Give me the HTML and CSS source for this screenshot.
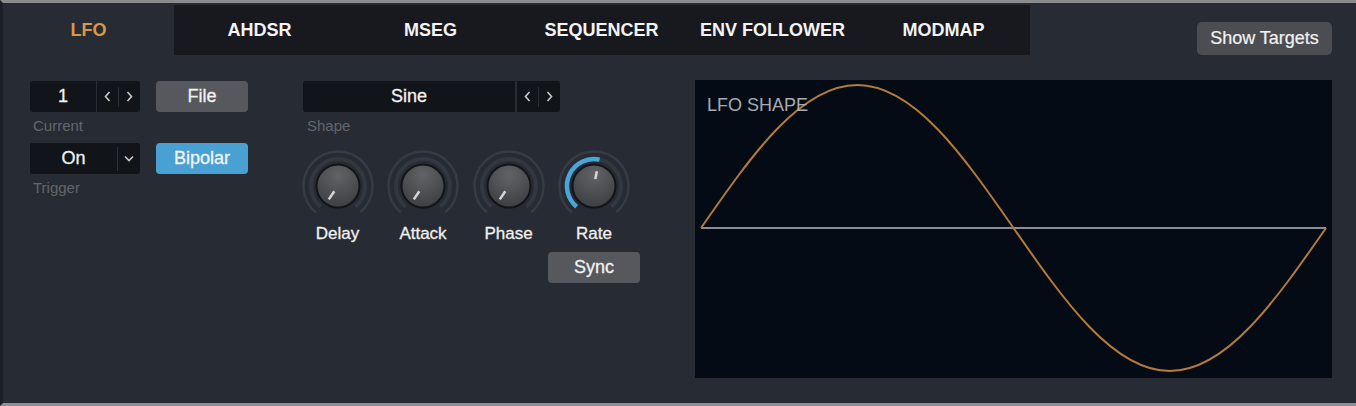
FILE: index.html
```html
<!DOCTYPE html>
<html>
  <head>
    <title>LFO</title>
    <link rel="stylesheet" href="styles.css">
  </head>
  <body>
    <svg class="defs" width="0" height="0">
      <defs>
        <radialGradient id="knobFill" cx="50%" cy="25%" r="80%">
          <stop offset="0%" stop-color="#626367" />
          <stop offset="100%" stop-color="#3b3c40" />
        </radialGradient>
      </defs>
    </svg>
    <div class="plugin">
      <div class="header">
        <nav class="tabs">
          <div class="tab active">LFO</div>
          <div class="tab">AHDSR</div>
          <div class="tab">MSEG</div>
          <div class="tab">SEQUENCER</div>
          <div class="tab">ENV FOLLOWER</div>
          <div class="tab">MODMAP</div>
        </nav>
        <button class="btn btn-targets">Show Targets</button>
      </div>

      <div class="main">
        <div class="left">
          <div class="row">
            <div class="field">
              <div class="value">1</div>
              <div class="arrows">
                <span class="arrow"><svg width="7" height="11" viewBox="0 0 7 11"><polyline points="5.5,1 1.5,5.5 5.5,10" /></svg></span>
                <span class="arrow-sep"></span>
                <span class="arrow"><svg width="7" height="11" viewBox="0 0 7 11"><polyline points="1.5,1 5.5,5.5 1.5,10" /></svg></span>
              </div>
            </div>
            <button class="btn">File</button>
          </div>
          <div class="caption">Current</div>

          <div class="row">
            <div class="field select">
              <div class="value">On</div>
              <span class="select-sep"></span>
              <span class="chevron"><svg width="10" height="7" viewBox="0 0 10 7"><polyline points="1,1.5 5,5.5 9,1.5" /></svg></span>
            </div>
            <button class="btn btn-blue">Bipolar</button>
          </div>
          <div class="caption">Trigger</div>
        </div>

        <div class="middle">
          <div class="field shape-field">
            <div class="value">Sine</div>
            <div class="arrows">
              <span class="arrow"><svg width="7" height="11" viewBox="0 0 7 11"><polyline points="5.5,1 1.5,5.5 5.5,10" /></svg></span>
              <span class="arrow-sep"></span>
              <span class="arrow"><svg width="7" height="11" viewBox="0 0 7 11"><polyline points="1.5,1 5.5,5.5 1.5,10" /></svg></span>
            </div>
          </div>
          <div class="caption shape-caption">Shape</div>

          <div class="knobs">
            <div class="knob">
              <svg viewBox="0 0 72 72">
                <path class="ring-outer" d="M13.8,62.4 A34.5,34.5 0 1 1 58.2,62.4" />
                <path class="ring-inner" d="M18.6,56.7 A27,27 0 1 1 53.4,56.7" />
                <circle class="knob-body" cx="36" cy="36" r="21.5" />
                <line class="pointer" x1="32.3" y1="41.3" x2="26.8" y2="49.4" />
              </svg>
              <div class="knob-label">Delay</div>
            </div>
            <div class="knob">
              <svg viewBox="0 0 72 72">
                <path class="ring-outer" d="M13.8,62.4 A34.5,34.5 0 1 1 58.2,62.4" />
                <path class="ring-inner" d="M18.6,56.7 A27,27 0 1 1 53.4,56.7" />
                <circle class="knob-body" cx="36" cy="36" r="21.5" />
                <line class="pointer" x1="32.3" y1="41.3" x2="26.8" y2="49.4" />
              </svg>
              <div class="knob-label">Attack</div>
            </div>
            <div class="knob">
              <svg viewBox="0 0 72 72">
                <path class="ring-outer" d="M13.8,62.4 A34.5,34.5 0 1 1 58.2,62.4" />
                <path class="ring-inner" d="M18.6,56.7 A27,27 0 1 1 53.4,56.7" />
                <circle class="knob-body" cx="36" cy="36" r="21.5" />
                <line class="pointer" x1="32.3" y1="41.3" x2="26.8" y2="49.4" />
              </svg>
              <div class="knob-label">Phase</div>
            </div>
            <div class="knob">
              <svg viewBox="0 0 72 72">
                <path class="ring-outer" d="M13.8,62.4 A34.5,34.5 0 1 1 58.2,62.4" />
                <path class="ring-inner" d="M18.6,56.7 A27,27 0 1 1 53.4,56.7" />
                <path class="ring-value" d="M18.6,56.7 A27,27 0 0 1 41.6,9.6" />
                <circle class="knob-body" cx="36" cy="36" r="21.5" />
                <line class="pointer" x1="37.3" y1="29.1" x2="38.9" y2="21.3" />
              </svg>
              <div class="knob-label">Rate</div>
              <button class="btn btn-sync">Sync</button>
            </div>
          </div>
        </div>

        <div class="graph">
          <div class="graph-title">LFO SHAPE</div>
          <svg viewBox="0 0 637 298" width="637" height="298">
            <line class="axis" x1="6" y1="148" x2="631" y2="148" />
            <path class="wave" d="M6,148 C56.96,74.74 105.7,5 162.25,5 C218.8,5 267.54,74.74 318.5,148 C369.46,221.26 418.2,291 474.75,291 C531.3,291 580.04,221.26 631,148" />
          </svg>
        </div>
      </div>
    </div>
  </body>
</html>
```

FILE: styles.css
```css
body {
  margin: 0;
  background-color: #272b33;
  font-family: "Liberation Sans", Arial, sans-serif;
}
.defs {
  position: absolute;
}
.plugin {
  height: 400px;
  border-top: 3px solid #8a8b8e;
  border-bottom: 3px solid #8e8f92;
  border-left: 3px solid #1b1e24;
  background-color: #272b33;
  overflow: hidden;
}
.header {
  display: flex;
  align-items: flex-end;
  padding-top: 2px;
  padding-right: 24px;
}
.tabs {
  display: flex;
  height: 50px;
  padding-right: 1px;
  background-color: #17191e;
}
.tab {
  width: 171px;
  display: flex;
  align-items: center;
  justify-content: center;
  color: #f3f3f3;
  font-size: 18px;
  font-weight: bold;
}
.tab.active {
  background-color: #272b33;
  color: #dc9848;
}
.btn {
  width: 92px;
  height: 31px;
  padding: 0;
  border: 0;
  border-radius: 4px;
  background-color: #56585d;
  color: #f2f2f2;
  font-family: "Liberation Sans", Arial, sans-serif;
  font-size: 18px;
  -webkit-text-stroke: 0.3px #f2f2f2;
}
.btn-targets {
  margin-left: auto;
  width: 135px;
  height: 33px;
  border-radius: 5px;
  background-color: #4b4d53;
  -webkit-text-stroke: 0.2px #f2f2f2;
}
.btn-blue {
  background-color: #48a1d2;
  color: #f4f8fb;
}
.main {
  display: flex;
  padding: 26px 24px 0 27px;
}
.left {
  width: 218px;
}
.row {
  display: flex;
  gap: 16px;
  height: 31px;
}
.field {
  width: 110px;
  height: 31px;
  display: flex;
}
.field .value {
  flex: 1;
  display: flex;
  align-items: center;
  justify-content: center;
  border-radius: 3px 0 0 3px;
  background-color: #111419;
  color: #f2f2f2;
  font-size: 18px;
  -webkit-text-stroke: 0.3px #f2f2f2;
}
.arrows {
  width: 43px;
  margin-left: 1px;
  display: flex;
  align-items: center;
  border-radius: 0 3px 3px 0;
  background-color: #111419;
}
.arrow {
  flex: 1;
  display: flex;
  justify-content: center;
}
.arrow svg,
.chevron svg {
  display: block;
  fill: none;
  stroke: #c9cacd;
  stroke-width: 1.6;
}
.arrow-sep {
  width: 1px;
  height: 20px;
  background-color: #2a2e35;
}
.select {
  align-items: center;
  border-radius: 3px;
  background-color: #111419;
}
.select .value {
  height: 31px;
}
.select-sep {
  width: 1px;
  height: 24px;
  background-color: #2c3037;
}
.chevron {
  width: 22px;
  display: flex;
  justify-content: center;
}
.caption {
  margin: 6px 0 9px 3px;
  color: #62666e;
  font-size: 15px;
  line-height: 16px;
}
.middle {
  width: 337px;
  margin-left: 55px;
}
.shape-field {
  width: 257px;
}
.shape-field .arrows {
  margin-left: 2px;
}
.shape-caption {
  margin: 6px 0 0 4px;
}
.knobs {
  display: flex;
  gap: 13.5px;
  margin-top: 16px;
  margin-left: -1.5px;
}
.knob {
  width: 72px;
  display: flex;
  flex-direction: column;
  align-items: center;
}
.knob svg {
  display: block;
  width: 72px;
  height: 72px;
  overflow: visible;
}
.ring-outer {
  fill: none;
  stroke: #373b43;
  stroke-width: 2.5;
}
.ring-inner {
  fill: none;
  stroke: #33373f;
  stroke-width: 4;
}
.ring-value {
  fill: none;
  stroke: #4aa5d8;
  stroke-width: 4.5;
}
.knob-body {
  fill: url(#knobFill);
  stroke: #121418;
  stroke-width: 2;
}
.pointer {
  stroke: #d6d6d6;
  stroke-width: 2.5;
}
.knob-label {
  margin-top: 2px;
  color: #f0f0f0;
  font-size: 17px;
  line-height: 20px;
  -webkit-text-stroke: 0.3px #f0f0f0;
}
.btn-sync {
  flex-shrink: 0;
  margin-top: 8px;
}
.graph {
  position: relative;
  width: 637px;
  height: 298px;
  margin-top: -1px;
  margin-left: auto;
  background-color: #050b15;
}
.graph svg {
  display: block;
}
.graph-title {
  position: absolute;
  left: 12px;
  top: 15px;
  color: #a6aab1;
  font-size: 18px;
  line-height: 20px;
}
.axis {
  stroke: #8b8d92;
  stroke-width: 2;
}
.wave {
  fill: none;
  stroke: #b37b36;
  stroke-width: 2;
}
```
